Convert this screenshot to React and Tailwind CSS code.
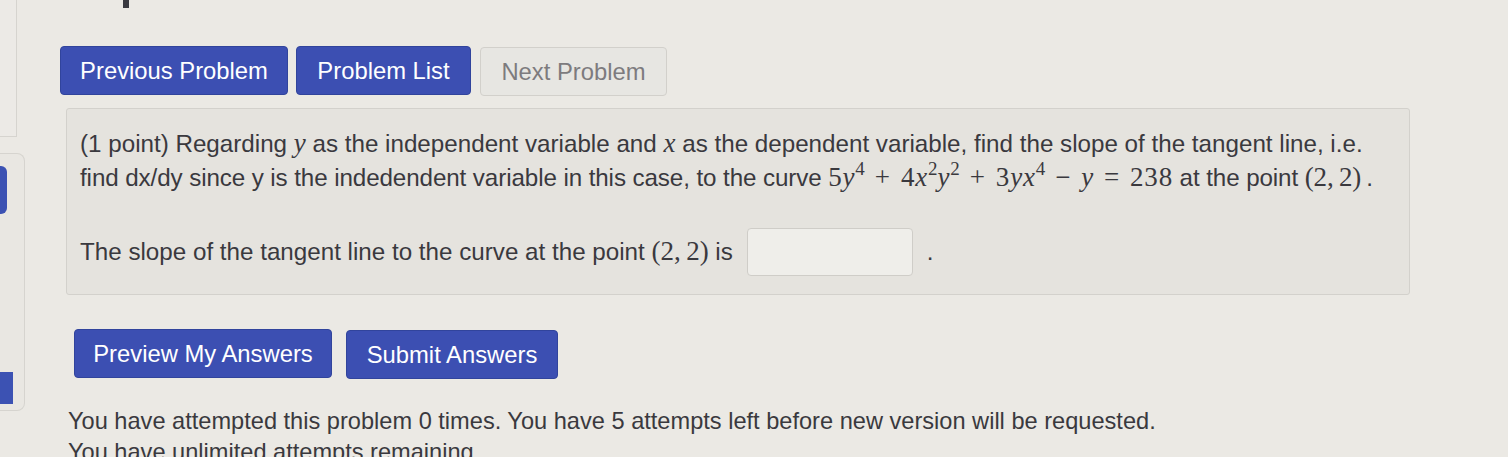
import React from "react";

const Op = ({ children }) => <span className="inline-block mx-[10px]">{children}</span>;
const Sup = ({ children }) => <sup className="text-[19px] -top-[11px] tracking-normal">{children}</sup>;

export default function App() {
  const btn =
    "h-[49px] shrink-0 rounded-[4px] flex items-center justify-center text-[23.8px]";
  const blue = "bg-[#3c4fb2] border border-[#31449c] text-white";
  const serif = "font-['Liberation_Serif',serif] text-[27px] leading-none";
  return (
    <div className="w-[1508px] h-[457px] overflow-hidden bg-[#ebe9e4] flex font-['Liberation_Sans',Arial,sans-serif] text-[#3a393e]">
      {/* left sidebar fragments */}
      <div className="w-[26px] flex flex-col shrink-0">
        <div className="w-[17px] h-[137px] shrink-0 bg-[#eceae6] border-r border-b border-[#d6d4cf]"></div>
        <div className="mt-[16px] w-[25px] h-[258px] shrink-0 bg-[#e9e7e2] border-r border-b border-t border-[#d6d4cf] rounded-r-[8px] flex flex-col">
          <div className="mt-[12px] w-[7px] h-[48px] shrink-0 bg-[#3c52b3] rounded-r-[6px]"></div>
          <div className="mt-[158px] w-[13px] h-[32px] shrink-0 bg-[#3c52b3]"></div>
        </div>
      </div>

      {/* main */}
      <div className="ml-[34px] flex flex-col">
        <div className="h-[8px] shrink-0 flex">
          <div className="ml-[63px] w-[6px] h-[8px] bg-[#3a3a40]"></div>
        </div>

        <div className="mt-[38px] shrink-0 flex items-start">
          <div className={`${btn} ${blue} w-[228px]`}>Previous Problem</div>
          <div className={`${btn} ${blue} ml-[8px] w-[175px]`}>Problem List</div>
          <div className={`${btn} ml-[9px] mt-[1px] w-[187px] bg-[#e7e6e2] border border-[#d2d0cb] text-[#7d7b7e]`}>
            Next Problem
          </div>
        </div>

        <div className="mt-[12px] ml-[6px] shrink-0 w-[1344px] h-[187px] bg-[#e5e3de] border border-[#d3d1cc] rounded-[3px] pl-[13px] pt-[18px] text-[24.2px] leading-[34px] whitespace-nowrap">
          <div>
            (1 point) Regarding <span className={`${serif} italic`}>y</span> as the independent variable and{" "}
            <span className={`${serif} italic`}>x</span> as the dependent variable, find the slope of the tangent line, i.e.
          </div>
          <div className="tracking-[-0.1px]">
            find dx/dy since y is the indedendent variable in this case, to the curve{" "}
            <span className={`${serif} tracking-[0.8px]`}>
              5<i>y</i>
              <Sup>4</Sup>
              <Op>+</Op>4<i>x</i>
              <Sup>2</Sup>
              <i>y</i>
              <Sup>2</Sup>
              <Op>+</Op>3<i>yx</i>
              <Sup>4</Sup>
              <Op>−</Op>
              <i>y</i>
              <Op>=</Op>238
            </span>{" "}
            at the point <span className={serif}>(2,&thinsp;2)</span>
            <span className="ml-[5px]">.</span>
          </div>
          <div className="mt-[33px] flex items-center h-[48px]">
            <span>
              The slope of the tangent line to the curve at the point <span className={serif}>(2,&thinsp;2)</span> is
            </span>
            <div className="ml-[14px] w-[166px] h-[48px] shrink-0 bg-[#efeeea] border border-[#cfcdc8] rounded-[4px]"></div>
            <span className="ml-[14px]">.</span>
          </div>
        </div>

        <div className="mt-[34px] ml-[14px] shrink-0 flex items-start">
          <div className={`${btn} ${blue} w-[258px]`}>Preview My Answers</div>
          <div className={`${btn} ${blue} ml-[14px] mt-[1px] w-[212px]`}>Submit Answers</div>
        </div>

        <div className="mt-[27px] ml-[8px] shrink-0 text-[23.6px] leading-[31px] whitespace-nowrap">
          <div>You have attempted this problem 0 times. You have 5 attempts left before new version will be requested.</div>
          <div>You have unlimited attempts remaining.</div>
        </div>
      </div>
    </div>
  );
}
